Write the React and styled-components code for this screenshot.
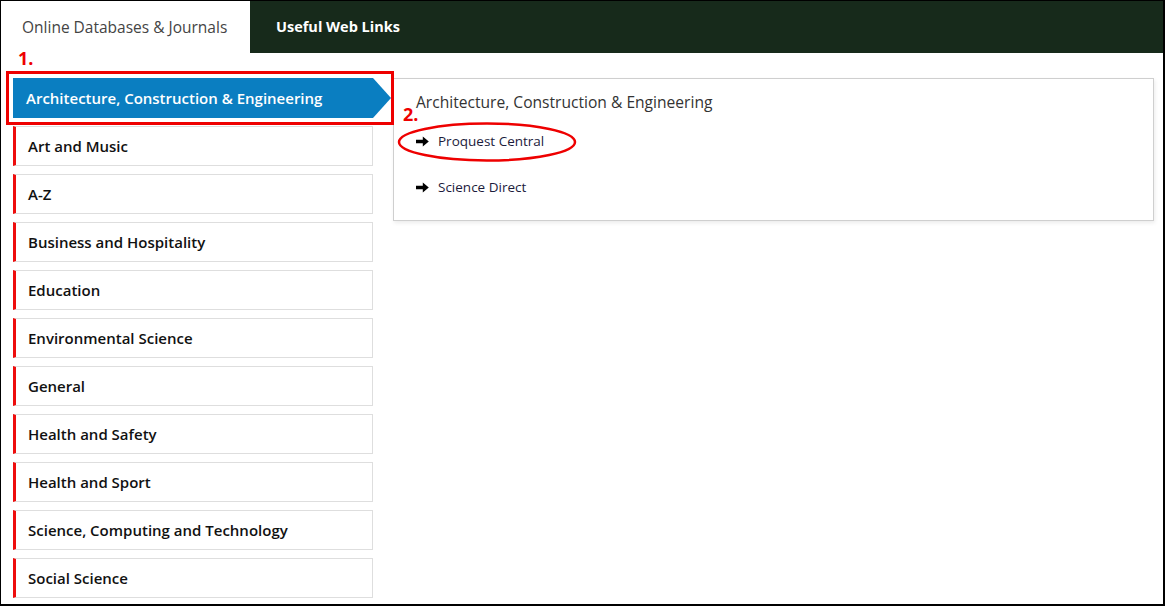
import React from "react";
import styled, { createGlobalStyle } from "styled-components";

const Global = createGlobalStyle`
  html, body { margin: 0; padding: 0; background: #fff; }
  body { font-family: "Open Sans", "Noto Sans", Arial, sans-serif; }
  * { box-sizing: border-box; }
`;

const Frame = styled.div`
  position: relative;
  width: 1165px;
  height: 606px;
  border: 1px solid #000;
  border-right-width: 2px;
  border-bottom-width: 2px;
  background: #fff;
  overflow: hidden;
`;

const TabBar = styled.div`
  display: flex;
  height: 52px;
  background: #172a1b;
`;

const Tab = styled.div`
  display: flex;
  align-items: center;
  width: ${(p) => (p.$active ? "249px" : "auto")};
  background: ${(p) => (p.$active ? "#fff" : "transparent")};
  color: ${(p) => (p.$active ? "#444" : "#fff")};
  font-size: ${(p) => (p.$active ? "15.5px" : "14.5px")};
  font-weight: ${(p) => (p.$active ? 400 : 700)};
  padding-left: ${(p) => (p.$active ? "21px" : "26px")};
  padding-bottom: 1px;
`;

const Body = styled.div`
  display: flex;
  align-items: flex-start;
  padding: 25px 9px 0 12px;
`;

const Menu = styled.div`
  display: flex;
  flex-direction: column;
  gap: 8px;
  width: 360px;
  flex-shrink: 0;
`;

const Item = styled.div`
  position: relative;
  display: flex;
  align-items: center;
  height: 40px;
  font-size: 15px;
  font-weight: 600;
  color: ${(p) => (p.$active ? "#fff" : "#111")};
  background: ${(p) => (p.$active ? "#0a7ec1" : "#fff")};
  border: ${(p) => (p.$active ? "none" : "1px solid #dedede")};
  border-left: 3px solid ${(p) => (p.$active ? "#0a7ec1" : "#ee0d0d")};
  padding-left: ${(p) => (p.$active ? "10px" : "12px")};

  &::after {
    content: "";
    display: ${(p) => (p.$active ? "block" : "none")};
    position: absolute;
    top: 0;
    right: -18px;
    border-top: 20px solid transparent;
    border-bottom: 20px solid transparent;
    border-left: 18px solid #0a7ec1;
  }
`;

const Panel = styled.div`
  flex: 1;
  margin-left: 20px;
  height: 143px;
  border: 1px solid #cfcfcf;
  box-shadow: 1px 2px 4px rgba(0, 0, 0, 0.08);
  padding: 12px 22px 0 22px;
`;

const PanelTitle = styled.div`
  font-size: 15.6px;
  color: #333;
  line-height: 22px;
  margin-bottom: 18px;
`;

const LinkList = styled.div`
  display: flex;
  flex-direction: column;
  gap: 26px;
`;

const LinkRow = styled.div`
  display: flex;
  align-items: center;
  gap: 9px;
  height: 20px;
  font-size: 13.5px;
  color: #1c1b3b;
`;

const Annotation = styled.div`
  position: absolute;
  color: #ee0000;
  font-weight: 700;
  font-size: 18px;
  font-family: "Open Sans", Arial, sans-serif;
  line-height: 1;
`;

const RedBox = styled.div`
  position: absolute;
  left: 5px;
  top: 70px;
  width: 388px;
  height: 54px;
  border: 3px solid #ee0000;
`;

const Ellipse = styled.svg`
  position: absolute;
  left: 396px;
  top: 120px;
`;

const Arrow = () => (
  <svg width="13" height="11" viewBox="0 0 13 11">
    <path d="M0 3.7 H6.8 V0.5 L12.8 5.5 L6.8 10.5 V7.3 H0 Z" fill="#000" />
  </svg>
);

const items = [
  "Art and Music",
  "A-Z",
  "Business and Hospitality",
  "Education",
  "Environmental Science",
  "General",
  "Health and Safety",
  "Health and Sport",
  "Science, Computing and Technology",
  "Social Science",
];

export default function App() {
  return (
    <>
      <Global />
      <Frame>
        <TabBar>
          <Tab $active>Online Databases &amp; Journals</Tab>
          <Tab>Useful Web Links</Tab>
        </TabBar>
        <Body>
          <Menu>
            <Item $active>Architecture, Construction &amp; Engineering</Item>
            {items.map((t) => (
              <Item key={t}>{t}</Item>
            ))}
          </Menu>
          <Panel>
            <PanelTitle>Architecture, Construction &amp; Engineering</PanelTitle>
            <LinkList>
              <LinkRow>
                <Arrow />
                Proquest Central
              </LinkRow>
              <LinkRow>
                <Arrow />
                Science Direct
              </LinkRow>
            </LinkList>
          </Panel>
        </Body>
        <Annotation style={{ left: 17, top: 48 }}>1.</Annotation>
        <RedBox />
        <Annotation style={{ left: 402, top: 104 }}>2.</Annotation>
        <Ellipse width="182" height="42" viewBox="0 0 182 42">
          <ellipse cx="90" cy="21" rx="88" ry="18.5" fill="none" stroke="#ee0000" strokeWidth="2.5" />
        </Ellipse>
      </Frame>
    </>
  );
}
